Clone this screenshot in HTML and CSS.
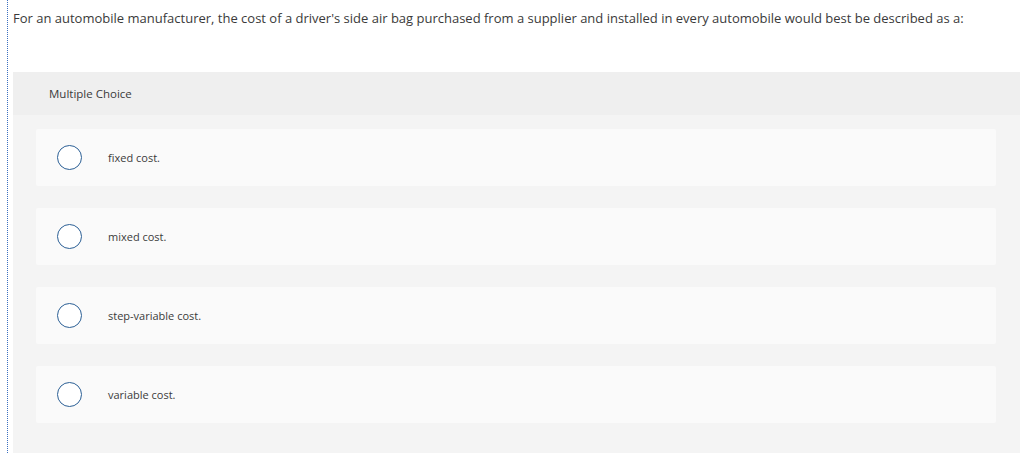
FILE: index.html
```html
<!DOCTYPE html>
<html>
<head>
<meta charset="utf-8">
<link rel="stylesheet" href="styles.css">
</head>
<body>
<div class="page">
  <p class="question">For an automobile manufacturer, the cost of a driver's side air bag purchased from a supplier and installed in every automobile would best be described as a:</p>
  <div class="panel">
    <div class="panel-head">Multiple Choice</div>
    <div class="options">
      <div class="option"><span class="radio"></span><span class="label">fixed cost.</span></div>
      <div class="option"><span class="radio"></span><span class="label">mixed cost.</span></div>
      <div class="option"><span class="radio"></span><span class="label">step-variable cost.</span></div>
      <div class="option"><span class="radio"></span><span class="label">variable cost.</span></div>
    </div>
  </div>
</div>
</body>
</html>
```

FILE: styles.css
```css
html, body {
  margin: 0;
  padding: 0;
  background: #ffffff;
  height: 100%;
  overflow: hidden;
}
body {
  font-family: "Open Sans", "Liberation Sans", sans-serif;
  color: #333333;
}
.page {
  margin-left: 7px;
  border-left: 1px dotted #3a6fc0;
  padding-left: 5px;
  padding-right: 4px;
  min-height: 100%;
  box-sizing: border-box;
}
.question {
  margin: 0;
  padding-top: 9px;
  height: 72px;
  box-sizing: border-box;
  font-size: 13px;
  line-height: 18px;
  color: #3a3a3a;
}
.panel {
  background: #f4f4f4;
  padding-bottom: 40px;
}
.panel-head {
  background: #efefef;
  height: 43px;
  display: flex;
  align-items: center;
  padding-left: 36px;
  font-size: 11.5px;
  color: #3a3a3a;
}
.options {
  display: flex;
  flex-direction: column;
  gap: 22px;
  padding: 14px 24px 0 23px;
}
.option {
  background: #fafafa;
  height: 57px;
  display: flex;
  align-items: center;
  border-radius: 2px;
}
.radio {
  width: 23px;
  height: 23px;
  border: 1px solid #2b5f95;
  border-radius: 50%;
  margin-left: 21px;
  flex: none;
  background: #fff;
}
.label {
  margin-left: 26px;
  font-size: 11px;
  color: #3a3a3a;
}
```
